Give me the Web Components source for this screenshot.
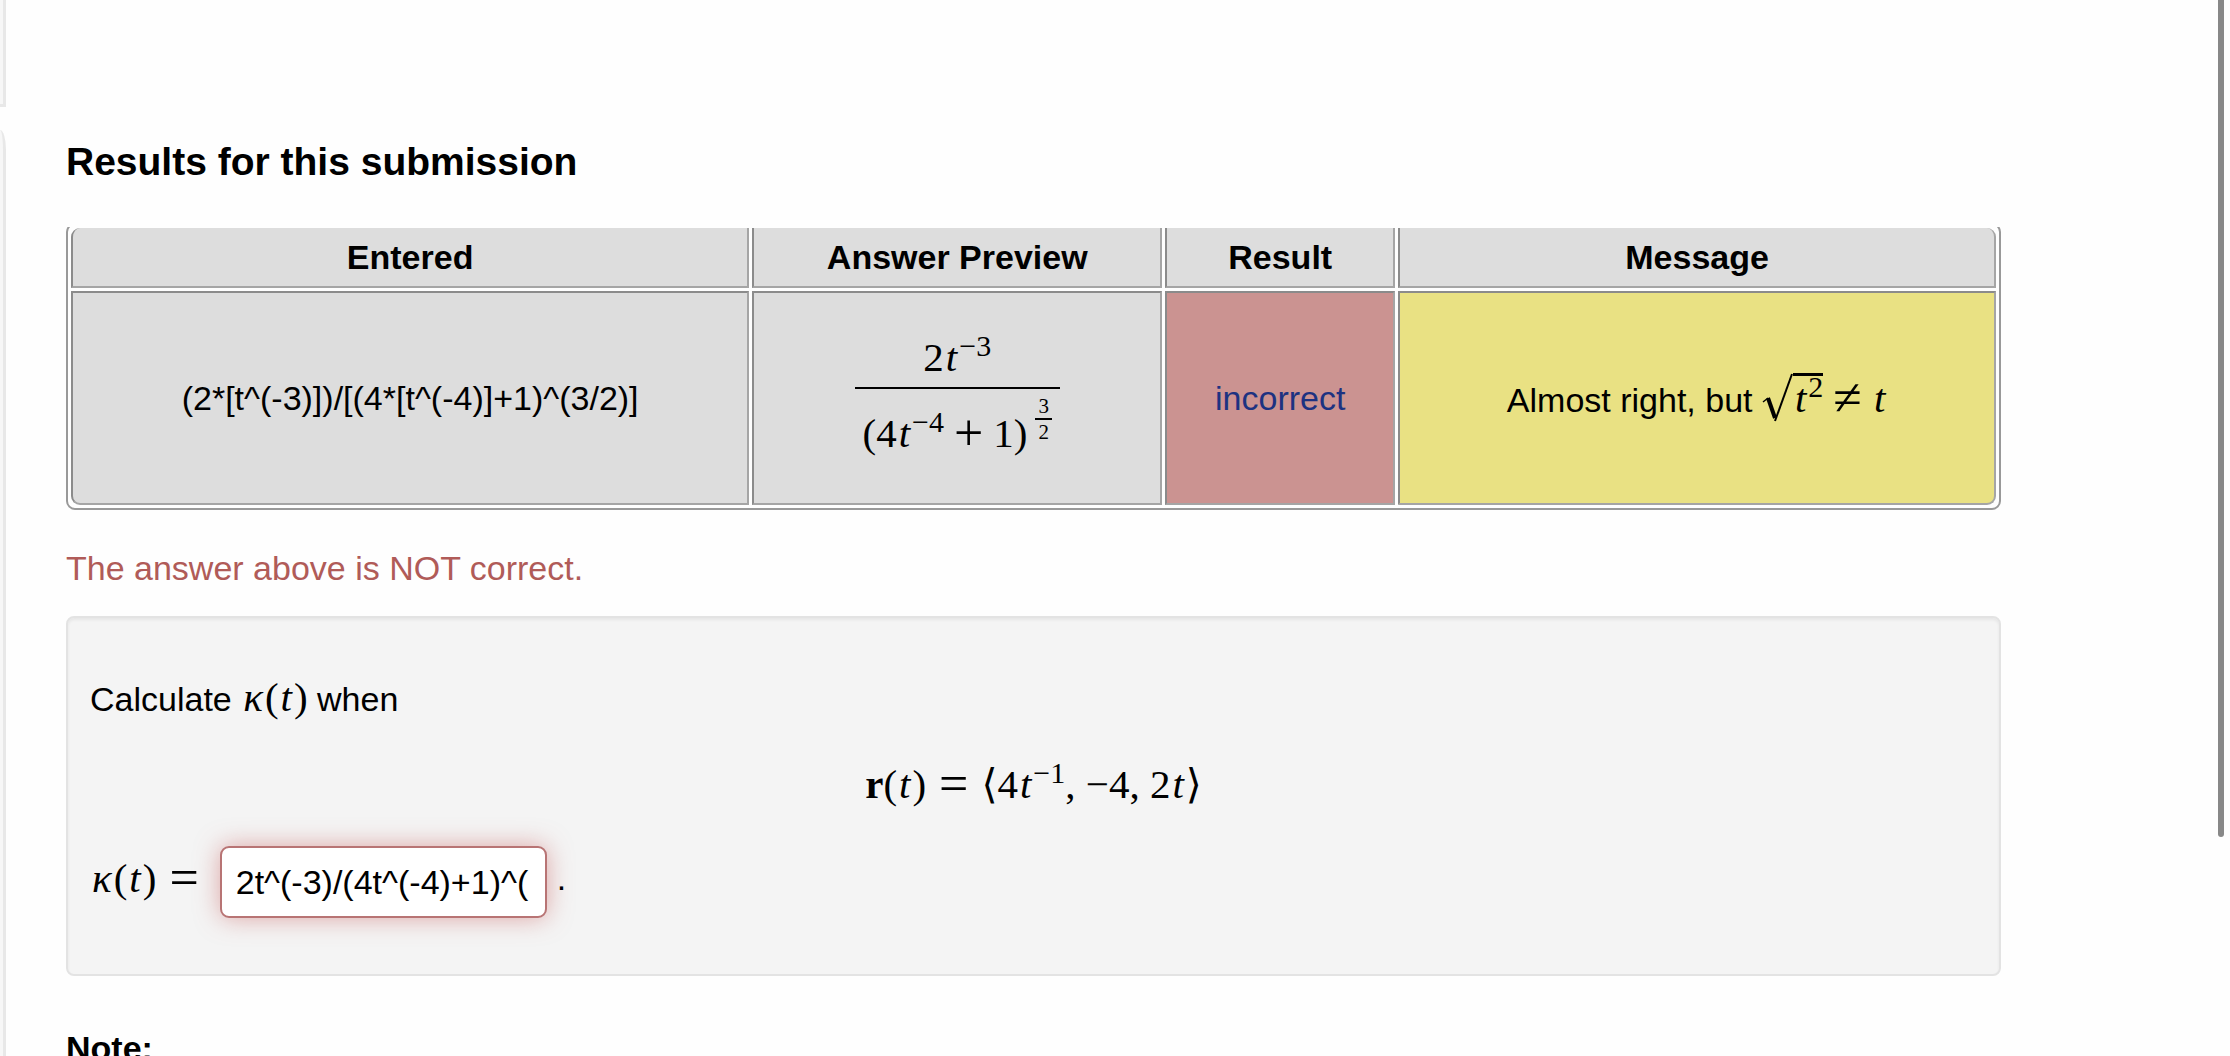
<!DOCTYPE html>
<html lang="en">
<head>
<meta charset="utf-8">
<title>Results for this submission</title>
<style>
  body { margin: 0; height: 100vh; overflow: hidden; background: #fefefe; color: #000; font: 34px/48px "Liberation Sans", Arial, sans-serif; }
</style>
</head>
<body>
<homework-page></homework-page>
<script>
function define(name, html) {
  const template = document.createElement('template');
  template.innerHTML = html.trim();
  customElements.define(name, class extends HTMLElement {
    constructor() {
      super();
      this.attachShadow({ mode: 'open' }).append(template.content.cloneNode(true));
    }
  });
}

/* Math typesetting */
define('math-text', `
  <style>
    :host { display: inline-block; font: 41px/60px "Liberation Serif", "DejaVu Serif", serif; white-space: nowrap; }
  </style><slot></slot>`);
define('math-var', `
  <style>:host { font-style: italic; padding: 0 2px; }</style><slot></slot>`);
define('math-op', `
  <style>
    :host { padding: 0 10px; font-size: 52px; line-height: 0; vertical-align: -3px; }
    :host([relation]) { padding: 0 13px; }
  </style><slot></slot>`);
define('math-sup', `
  <style>:host { font-size: 30px; line-height: 0; vertical-align: 15px; }</style><slot></slot>`);
define('math-frac', `
  <style>
    :host { display: inline-flex; flex-direction: column; text-align: center; }
    .bar { height: 2px; background: #000; }
    .den { padding: 5px 8px 6px; }
    :host([small]) { font-size: 21px; line-height: 24px; vertical-align: 34px; margin-left: 8px; }
    :host([small]) .den { padding: 0 3px; }
  </style>
  <div><slot name="num"></slot></div><div class="bar"></div><div class="den"><slot name="den"></slot></div>`);
define('math-root', `
  <style>
    :host { display: inline-flex; align-items: baseline; vertical-align: baseline; line-height: 44px; }
    svg { width: 31px; height: 49px; align-self: flex-start; flex: none; }
    .body { border-top: 3px solid #000; }
  </style>
  <svg viewBox="0 0 31 49" fill="none" stroke="#000" aria-hidden="true">
    <path d="M1 29l5-4" stroke-width="1.5"/><path d="M6 25l7 20" stroke-width="4"/><path d="M13 48L30 1" stroke-width="2"/>
  </svg><span class="body"><slot></slot></span>`);

/* Side panels cut off at the left edge */
define('side-panels', `
  <style>
    :host { display: flex; flex-direction: column; gap: 23px; width: 6px; }
    div { border-right: 3px solid #e8e8e8; background: #f7f7f7; }
    .top { height: 104px; border-bottom: 3px solid #e8e8e8; }
    .rest { flex: 1; border-top-right-radius: 6px 20px; }
  </style><div class="top"></div><div class="rest"></div>`);

define('scroll-thumb', `
  <style>
    :host { width: 12px; display: block; }
    div { width: 6px; height: 837px; border-radius: 0 0 3px 3px; background: #888; }
  </style><div></div>`);

define('attempt-results', `
  <style>
    :host { display: block; overflow: hidden; }
    table { width: 100%; margin-top: -4px; box-sizing: border-box; table-layout: fixed; border-collapse: separate; border-spacing: 3px;
            border: 2px solid #999; border-radius: 9px; background: #fefefe; }
    th, td { box-sizing: border-box; padding: 0; text-align: center; vertical-align: middle; background: #ddd;
             border: 2px solid; border-color: #8b8b8b #a5a5a5 #a5a5a5 #8b8b8b; }
    th { height: 60px; border-top: 0; font-weight: bold; }
    td { height: 214px; }
    th:first-child { border-top-left-radius: 9px; }
    th:last-child { border-top-right-radius: 9px; }
    td:first-child { border-bottom-left-radius: 9px; }
    td:last-child { border-bottom-right-radius: 9px; background: #e9e183; }
    td.wrong { background: #cb9391; }
    .wrong a { color: #1d3281; text-decoration: none; }
    .c1 { width: 35.4%; } .c2 { width: 21.4%; } .c3 { width: 12%; }
    math-frac { vertical-align: middle; }
    math-frac[small] { vertical-align: 34px; }
  </style>
  <table>
    <colgroup><col class="c1"><col class="c2"><col class="c3"><col></colgroup>
    <thead><tr><th>Entered</th><th>Answer Preview</th><th>Result</th><th>Message</th></tr></thead>
    <tbody><tr>
      <td>(2*[t^(-3)])/[(4*[t^(-4)]+1)^(3/2)]</td>
      <td><math-text><math-frac><span slot="num">2<math-var>t</math-var><math-sup>−3</math-sup></span><span slot="den">(4<math-var>t</math-var><math-sup>−4</math-sup><math-op>+</math-op>1)<math-frac small><span slot="num">3</span><span slot="den">2</span></math-frac></span></math-frac></math-text></td>
      <td class="wrong"><a href="#answer">incorrect</a></td>
      <td>Almost right, but <math-text><math-root><math-var>t</math-var><math-sup>2</math-sup></math-root><math-op>≠</math-op><math-var>t</math-var></math-text></td>
    </tr></tbody>
  </table>`);

define('answer-field', `
  <style>
    :host { display: flex; align-items: flex-start; }
    input { box-sizing: border-box; width: 327px; height: 72px; margin: 0 10px 0 8px; padding: 0 14px; border: 2px solid #b87474;
            border-radius: 9px; background: #fff; color: #000; font: inherit; outline: 0; box-shadow: 0 0 24px rgba(200, 90, 88, .5); }
    .dot, ::slotted(math-text) { line-height: 64px; }
  </style>
  <label for="answer"><slot></slot></label><input id="answer" type="text" value="2t^(-3)/(4t^(-4)+1)^("><span class="dot">.</span>`);

define('problem-box', `
  <style>
    :host { display: block; box-sizing: border-box; padding: 57px 22px 56px; border: 2px solid #e3e3e3; border-radius: 8px; background: #f4f4f4;
            box-shadow: inset 0 2px 3px rgba(0, 0, 0, .06); }
    p { margin: 0; }
    p math-text { line-height: 44px; }
    answer-field math-text { line-height: 64px; }
    .display { margin: 31px 0 32px; text-align: center; }
  </style>
  <p>Calculate <math-text><math-var>κ</math-var>(<math-var>t</math-var>)</math-text> when</p>
  <div class="display"><math-text><b>r</b>(<math-var>t</math-var>)<math-op relation>=</math-op>⟨4<math-var>t</math-var><math-sup>−1</math-sup>, −4, 2<math-var>t</math-var>⟩</math-text></div>
  <answer-field><math-text><math-var>κ</math-var>(<math-var>t</math-var>)<math-op relation>=</math-op></math-text></answer-field>`);

define('homework-page', `
  <style>
    :host { display: flex; height: 100%; }
    main { flex: 1; min-width: 0; padding: 136px 217px 0 60px; }
    h2 { margin: 0 0 39px; font-size: 39px; line-height: 52px; }
    .verdict { margin: 34px 0 24px; color: #b05b58; }
    .note { margin: 48px 0 0; font-weight: bold; }
    p { margin: 0; }
  </style>
  <side-panels></side-panels>
  <main>
    <h2>Results for this submission</h2>
    <attempt-results></attempt-results>
    <p class="verdict">The answer above is NOT correct.</p>
    <problem-box></problem-box>
    <p class="note">Note:</p>
  </main>
  <scroll-thumb></scroll-thumb>`);
</script>
</body>
</html>
